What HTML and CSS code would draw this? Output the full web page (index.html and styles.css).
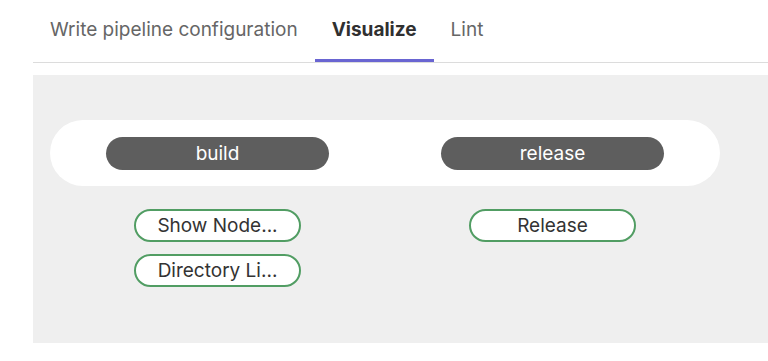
FILE: index.html
```html
<!DOCTYPE html>
<html lang="en">
<head>
<meta charset="utf-8">
<title>Pipeline editor</title>
<link rel="stylesheet" href="styles.css">
</head>
<body>
<div class="page">
  <nav class="tabs">
    <a class="tab">Write pipeline configuration</a>
    <a class="tab active">Visualize</a>
    <a class="tab">Lint</a>
  </nav>
  <section class="graph">
    <div class="stages">
      <div class="stage"><span class="stage-pill">build</span></div>
      <div class="stage"><span class="stage-pill">release</span></div>
    </div>
    <div class="jobs">
      <div class="job-col">
        <span class="job">Show Node...</span>
        <span class="job">Directory Li...</span>
      </div>
      <div class="job-col">
        <span class="job">Release</span>
      </div>
    </div>
  </section>
</div>
</body>
</html>
```
FILE: styles.css
```css
html, body {
  margin: 0;
  padding: 0;
  background: #ffffff;
}
body {
  font-family: Inter, "Liberation Sans", Arial, sans-serif;
  font-size: 19px;
  color: #333333;
}
.page {
  padding-left: 33px;
}
.tabs {
  display: flex;
  height: 62px;
  border-bottom: 1px solid #dcdcdc;
}
.tab {
  display: flex;
  align-items: center;
  padding: 0 17px;
  color: #666666;
  border-bottom: 3px solid transparent;
}
.tab.active {
  color: #303030;
  font-weight: 700;
  border-bottom-color: #6965d2;
}
.graph {
  margin-top: 12px;
  height: 268px;
  background: #efefef;
  padding: 45px 0 0 17px;
  box-sizing: border-box;
}
.stages {
  display: grid;
  grid-template-columns: 335px 335px;
  width: 670px;
  height: 66px;
  border-radius: 33px;
  background: #ffffff;
  align-items: center;
}
.stage {
  display: flex;
  justify-content: center;
}
.stage-pill {
  display: flex;
  align-items: center;
  justify-content: center;
  width: 223px;
  height: 33px;
  border-radius: 17px;
  background: #5e5e5e;
  color: #ffffff;
}
.jobs {
  display: grid;
  grid-template-columns: 335px 335px;
  margin-top: 23px;
}
.job-col {
  display: flex;
  flex-direction: column;
  align-items: center;
  gap: 12px;
}
.job {
  display: flex;
  align-items: center;
  justify-content: center;
  width: 167px;
  height: 33px;
  box-sizing: border-box;
  border: 2px solid #519d63;
  border-radius: 17px;
  background: #ffffff;
  color: #333333;
}
```
